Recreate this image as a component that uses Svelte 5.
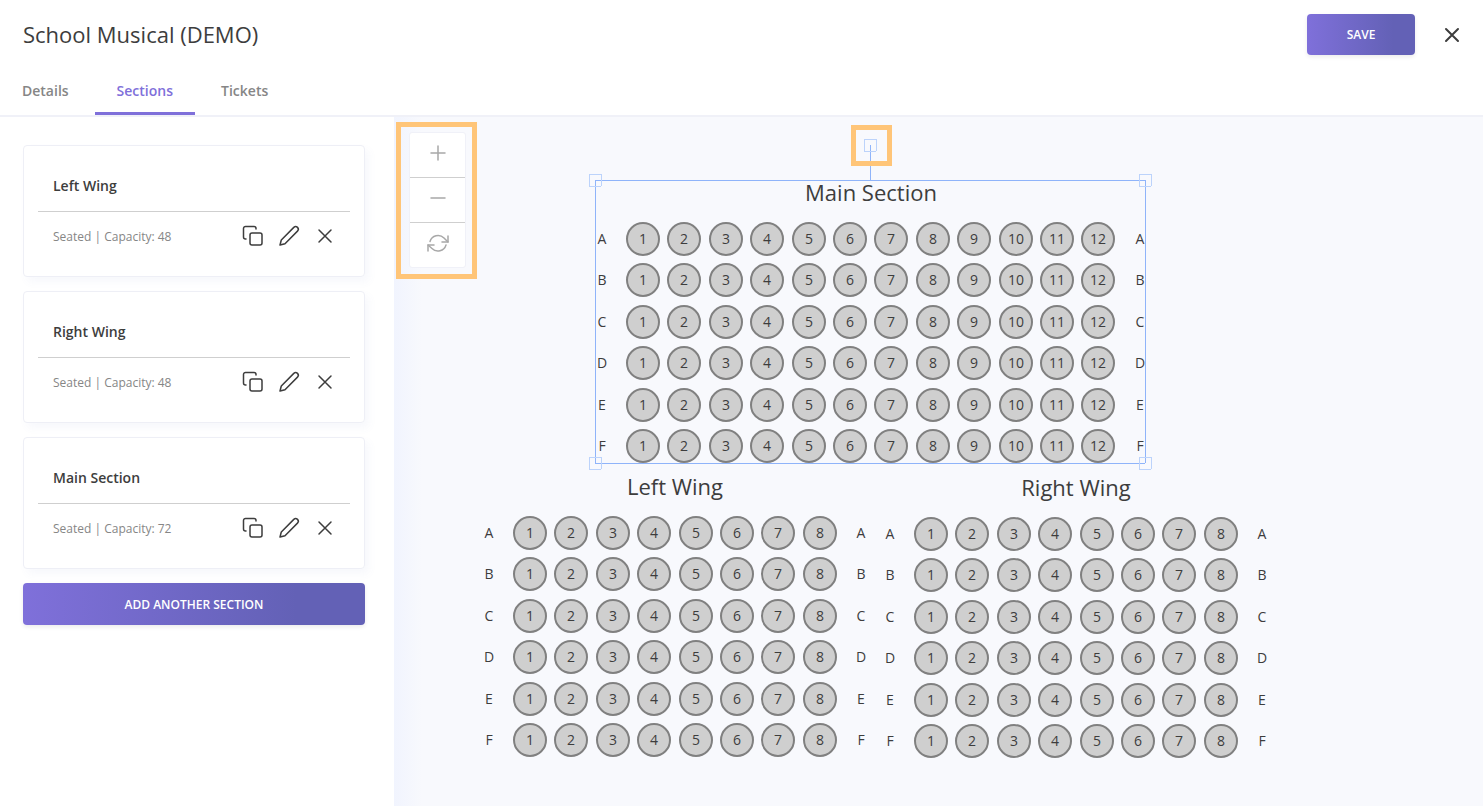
<script>
  const tabs = ['Details', 'Sections', 'Tickets'];
  let activeTab = 'Sections';

  let sections = [
    { name: 'Left Wing', capacity: 48 },
    { name: 'Right Wing', capacity: 48 },
    { name: 'Main Section', capacity: 72 }
  ];

  const rows = ['A', 'B', 'C', 'D', 'E', 'F'];

  // x / y is the centre of the first seat
  const blocks = [
    { name: 'Main Section', x: 249, y: 122, seats: 12 },
    { name: 'Left Wing', x: 136, y: 416, seats: 8 },
    { name: 'Right Wing', x: 537, y: 417, seats: 8 }
  ];

  const selection = { x: 201, y: 63, width: 550, height: 283 };
  const corners = [
    [selection.x, selection.y],
    [selection.x + selection.width, selection.y],
    [selection.x, selection.y + selection.height],
    [selection.x + selection.width, selection.y + selection.height]
  ];

  // seats are 50 units apart
  const zoom = 0.828;
  const at = (n) => Math.round(n * 50 * zoom);
</script>

<div class="page">
  <header>
    <div class="title-bar">
      <h1>School Musical (DEMO)</h1>
      <button class="primary save">SAVE</button>
      <button class="icon" aria-label="Close">
        <svg width="24" height="24" viewBox="0 0 24 24"><path d="M6 6l12 12M18 6L6 18" stroke-width="2" /></svg>
      </button>
    </div>
    <nav>
      {#each tabs as tab}
        <button class="tab" class:active={tab === activeTab} on:click={() => (activeTab = tab)}>{tab}</button>
      {/each}
    </nav>
  </header>

  <main>
    <aside>
      {#each sections as section}
        <div class="card">
          <h2>{section.name}</h2>
          <div class="card-row">
            <p>Seated | Capacity: {section.capacity}</p>
            <button class="icon" aria-label="Duplicate {section.name}">
              <svg width="24" height="24" viewBox="0 0 24 24">
                <rect x="9" y="9" width="12" height="12" rx="2" />
                <path d="M5 15H4.500a2 2 0 0 1-2-2V4.500a2 2 0 0 1 2-2H13a2 2 0 0 1 2 2V5" />
              </svg>
            </button>
            <button class="icon" aria-label="Edit {section.name}">
              <svg width="24" height="24" viewBox="0 0 24 24">
                <path d="M3 21l1.300-5L16.800 3.400a2.500 2.500 0 0 1 3.700 3.700L8 19.700z" />
              </svg>
            </button>
            <button class="icon" aria-label="Delete {section.name}">
              <svg width="24" height="24" viewBox="0 0 24 24"><path d="M6 6l12 12M18 6L6 18" /></svg>
            </button>
          </div>
        </div>
      {/each}
      <button class="primary">ADD ANOTHER SECTION</button>
    </aside>

    <div class="canvas">
      <svg class="map">
        {#each blocks as block}
          <text class="block-name" x={block.x + at((block.seats - 1) / 2)} y={block.y - 38}>{block.name}</text>
          {#each rows as row, r}
            <text x={block.x - at(1)} y={block.y + at(r) + 5}>{row}</text>
            {#each { length: block.seats } as _, s}
              <circle cx={block.x + at(s)} cy={block.y + at(r)} r="16" />
              <text x={block.x + at(s)} y={block.y + at(r) + 5}>{s + 1}</text>
            {/each}
            <text x={block.x + at(block.seats)} y={block.y + at(r) + 5}>{row}</text>
          {/each}
        {/each}

        <g class="selection">
          <rect {...selection} />
          <path d="M476 28V63" />
          {#each corners as [x, y]}
            <rect class="handle" x={x - 6} y={y - 6} width="12" height="12" />
          {/each}
          <rect class="handle" x="470" y="22" width="12" height="12" />
        </g>
        <rect class="highlight" x="459" y="10" width="36" height="36" />
      </svg>

      <div class="tools">
        <div class="tool-group">
          <button aria-label="Zoom in">
            <svg width="24" height="24" viewBox="0 0 24 24"><path d="M12 5v14M5 12h14" /></svg>
          </button>
          <button aria-label="Zoom out">
            <svg width="24" height="24" viewBox="0 0 24 24"><path d="M5 12h14" /></svg>
          </button>
          <button aria-label="Reset">
            <svg width="24" height="24" viewBox="0 0 24 24">
              <path d="M22 5v6h-6M2 20v-6h6" />
              <path d="M4 10.500a8.400 8.400 0 0 1 14-3.500L22 11M2 14l4 3.500a8.400 8.400 0 0 0 14-3.500" />
            </svg>
          </button>
        </div>
      </div>
    </div>
  </main>
</div>

<style>
  :global(body) {
    margin: 0;
  }

  .page {
    display: flex;
    flex-direction: column;
    min-height: 100vh;
    font-family: 'Open Sans', 'Noto Sans', sans-serif;
    color: #3d3d3d;
    background: #fff;
  }

  button {
    padding: 0;
    border: 0;
    background: none;
    font: inherit;
    color: inherit;
    cursor: pointer;
  }

  svg {
    display: block;
    fill: none;
    stroke: currentColor;
    stroke-width: 1.5;
    stroke-linecap: round;
    stroke-linejoin: round;
  }

  header {
    border-bottom: 2px solid #f0f1f8;
  }

  .title-bar {
    display: flex;
    align-items: center;
    padding: 14px 19px 0 23px;
  }

  h1 {
    flex: 1;
    margin: 0;
    font-size: 22px;
    font-weight: 400;
    line-height: 41px;
  }

  .primary {
    height: 42px;
    border-radius: 4px;
    background: linear-gradient(90deg, #7f70da, #6361b6 80%);
    box-shadow: 0 2px 4px rgba(0, 0, 0, 0.08);
    color: #fff;
    font-size: 12px;
    font-weight: 600;
  }

  .save {
    width: 108px;
    height: 41px;
    margin-right: 25px;
  }

  nav {
    display: flex;
    gap: 4px;
    padding-top: 10px;
  }

  .tab {
    height: 50px;
    padding: 3px 22px 0;
    border-bottom: 3px solid transparent;
    font-size: 14px;
    font-weight: 600;
    color: #868686;
  }

  .tab.active {
    border-color: #7f70da;
    border-radius: 3px 3px 0 0;
    color: #7f70da;
  }

  main {
    display: flex;
    flex: 1;
  }

  aside {
    display: flex;
    flex-direction: column;
    gap: 14px;
    box-sizing: border-box;
    width: 394px;
    padding: 28px 29px 28px 23px;
  }

  .card {
    box-sizing: border-box;
    height: 132px;
    padding: 14px;
    border: 1px solid #eeeff6;
    border-radius: 4px;
    box-shadow: 4px 5px 8px rgba(90, 110, 200, 0.05);
  }

  h2 {
    margin: 0;
    padding: 15px 15px 14px;
    border-bottom: 1px solid #cfcfcf;
    font-size: 14px;
    font-weight: 600;
    line-height: 22px;
  }

  .card-row {
    display: flex;
    align-items: center;
    gap: 12px;
    padding: 12px 13px 0 15px;
  }

  .card-row p {
    flex: 1;
    margin: 0;
    font-size: 12px;
    color: #868686;
  }

  .canvas {
    position: relative;
    flex: 1;
    overflow: hidden;
    background: linear-gradient(90deg, #f1f4fe, #f8f9fd 28px);
  }

  .map {
    width: 100%;
    height: 100%;
    stroke: none;
  }

  .map text {
    fill: #3d3d3d;
    font-size: 14px;
    text-anchor: middle;
  }

  .map .block-name {
    font-size: 22px;
  }

  circle {
    fill: #cfcfcf;
    stroke: #808080;
    stroke-width: 2;
  }

  .selection {
    stroke: #8fb4fa;
    stroke-width: 1;
    shape-rendering: crispEdges;
  }

  .handle {
    stroke: #bcd3fb;
  }

  .highlight {
    stroke: #ffc578;
    stroke-width: 5;
    stroke-linejoin: miter;
    shape-rendering: crispEdges;
  }

  .tools {
    position: absolute;
    top: 5px;
    left: 2px;
    padding: 5px 6px 6px 8px;
    border: 5px solid #ffc578;
  }

  .tool-group {
    display: flex;
    flex-direction: column;
    width: 55px;
    border: 1px solid #f0f1f8;
    border-radius: 3px;
    background: #fff;
    color: #a8a8a8;
  }

  .tool-group button {
    display: flex;
    justify-content: center;
    height: 44px;
    padding-top: 8px;
    box-sizing: border-box;
  }

  .tool-group button + button {
    border-top: 1px solid #cfcfcf;
    height: 45px;
  }
</style>
